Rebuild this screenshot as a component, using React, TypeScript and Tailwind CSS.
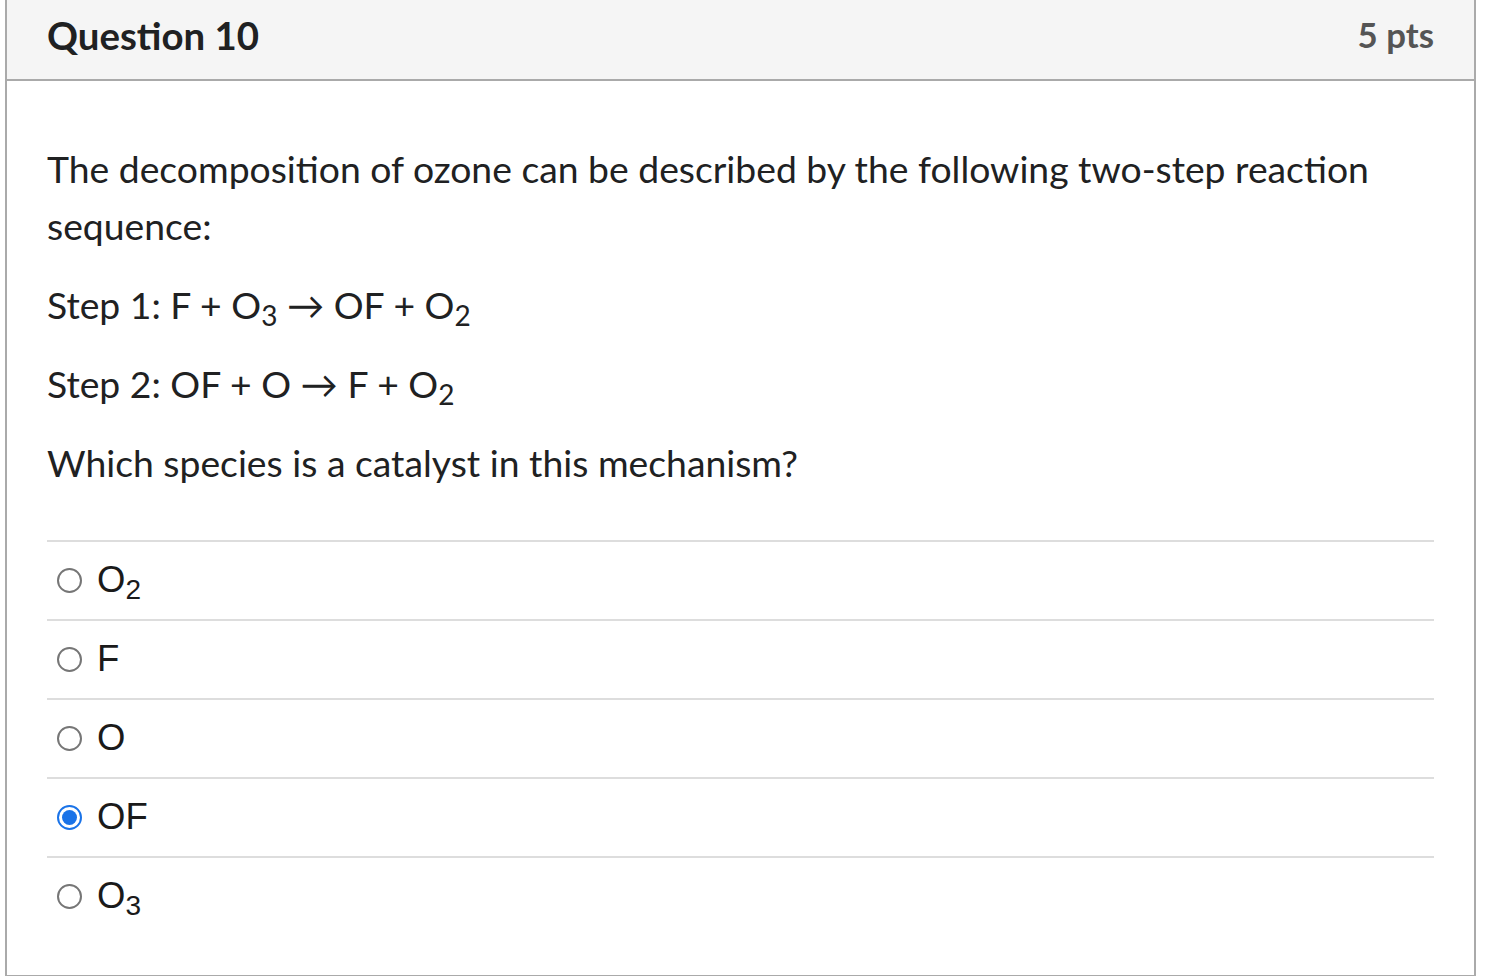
import React from "react";

const answers = [
  { label: "O", sub: "2", checked: false },
  { label: "F", sub: "", checked: false },
  { label: "O", sub: "", checked: false },
  { label: "OF", sub: "", checked: true },
  { label: "O", sub: "3", checked: false },
];

function Radio({ checked }: { checked: boolean }) {
  if (checked) {
    return (
      <span className="flex h-[25px] w-[25px] items-center justify-center rounded-full border-[2px] border-[#1a73e8] bg-white">
        <span className="h-[15px] w-[15px] rounded-full bg-[#1a73e8]" />
      </span>
    );
  }
  return <span className="block h-[25px] w-[25px] rounded-full border-[2px] border-[#767676] bg-white" />;
}

export default function App() {
  return (
    <div className="min-h-screen bg-white" style={{ fontFamily: "Lato, 'Noto Sans', sans-serif" }}>
      <div className="ml-[5px] w-[1471px] border-x-2 border-b-2 border-[#aaaaaa]">
        <div className="flex h-[81px] items-center justify-between border-b-2 border-[#aaaaaa] bg-[#f5f5f5] px-[40px] pb-[8px]">
          <h2 className="text-[38.4px] font-bold text-[#202122]">Question 10</h2>
          <span className="text-[34.8px] font-bold text-[#555555]">5 pts</span>
        </div>
        <div className="px-[40px] pt-[59px] pb-[40px] text-[37.3px] leading-[57px] text-[#202122]">
          <p>The decomposition of ozone can be described by the following two-step reaction sequence:</p>
          <p className="mt-[22px]">
            Step 1: F + O<sub>3</sub> → OF + O<sub>2</sub>
          </p>
          <p className="mt-[22px]">
            Step 2: OF + O → F + O<sub>2</sub>
          </p>
          <p className="mt-[22px]">Which species is a catalyst in this mechanism?</p>

          <div className="mt-[49px]">
            {answers.map((a, i) => (
              <div key={i} className="flex h-[79px] items-center border-t-2 border-[#dddddd]">
                <div className="ml-[10px] mr-[15px]">
                  <Radio checked={a.checked} />
                </div>
                <span
                  className="text-[36.5px] leading-none text-[#1a1a1a]"
                  style={{ fontFamily: "'Liberation Sans', Arial, sans-serif" }}
                >
                  {a.label}
                  {a.sub && <sub className="text-[28px]">{a.sub}</sub>}
                </span>
              </div>
            ))}
          </div>
        </div>
      </div>
    </div>
  );
}
